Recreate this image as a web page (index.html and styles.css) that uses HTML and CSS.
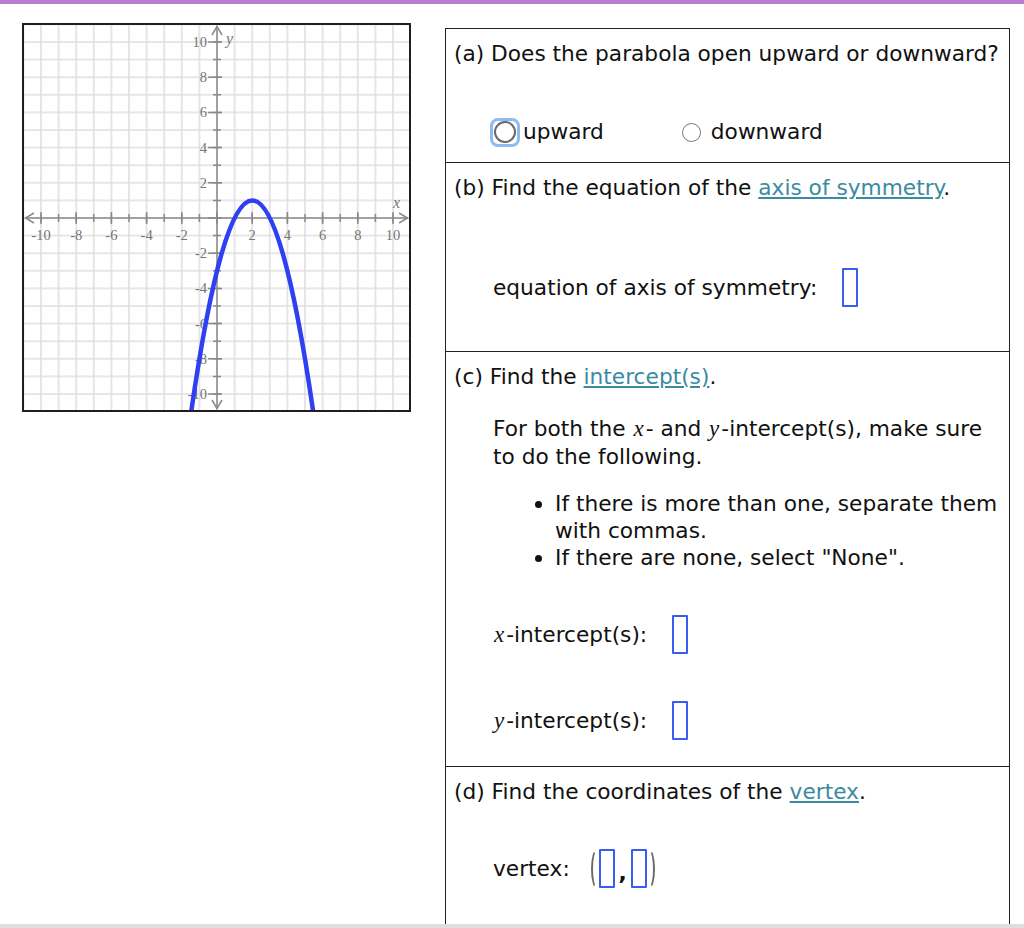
FILE: index.html
```html
<!DOCTYPE html>
<html lang="en">
<head>
    <meta charset="UTF-8">
    <title>Parabola</title>
    <link rel="stylesheet" href="styles.css">
</head>
<body>
    <div class="topbar"></div>
    <div class="page">
        <div class="graph">
            <svg width="385" height="385" viewBox="0 0 385 385">
                <defs>
                    <pattern id="grid" x="184.2" y="184.2" width="17.6" height="17.6" patternUnits="userSpaceOnUse">
                        <path d="M8.8 0 V17.6 M0 8.8 H17.6" stroke="#dedede" stroke-width="1.5" fill="none"/>
                    </pattern>
                </defs>
                <rect width="385" height="385" fill="url(#grid)"/>

                <!-- axes -->
                <g stroke="#8a8a8a" fill="none" stroke-width="1.5">
                    <path d="M1 193 H384 M193 1 V384"/>
                    <path d="M10 188 L1.5 193 L10 198 M375 188 L383.5 193 L375 198"/>
                    <path d="M188 10 L193 1.5 L198 10 M188 375 L193 383.5 L198 375"/>
                    <line x1="16.25" y1="193" x2="370" y2="193" stroke-width="8" stroke-dasharray="1.5 16.1"/>
                    <line x1="16.25" y1="193" x2="370" y2="193" stroke-width="12" stroke-dasharray="1.5 33.7"/>
                    <line x1="193" y1="16.25" x2="193" y2="370" stroke-width="8" stroke-dasharray="1.5 16.1"/>
                    <line x1="191" y1="16.25" x2="191" y2="370" stroke-width="14" stroke-dasharray="1.5 33.7"/>
                </g>

                <g class="ticklabels" text-anchor="middle">
                    <text x="17" y="215">-10</text>
                    <text x="52.2" y="215">-8</text>
                    <text x="87.4" y="215">-6</text>
                    <text x="122.6" y="215">-4</text>
                    <text x="157.8" y="215">-2</text>
                    <text x="228.2" y="215">2</text>
                    <text x="263.4" y="215">4</text>
                    <text x="298.6" y="215">6</text>
                    <text x="333.8" y="215">8</text>
                    <text x="369" y="215">10</text>
                </g>
                <g class="ticklabels" text-anchor="end">
                    <text x="183" y="22">10</text>
                    <text x="183" y="57.2">8</text>
                    <text x="183" y="92.4">6</text>
                    <text x="183" y="127.6">4</text>
                    <text x="183" y="162.8">2</text>
                    <text x="183" y="233.2">-2</text>
                    <text x="183" y="268.4">-4</text>
                    <text x="183" y="303.6">-6</text>
                    <text x="183" y="338.8">-8</text>
                    <text x="183" y="374">-10</text>
                </g>
                <text class="axisname" x="202" y="19">y</text>
                <text class="axisname" x="369" y="183">x</text>

                <path d="M166.6 391 Q228.2 -40.2 289.8 391" stroke="#2f3ff2" stroke-width="4.5" fill="none"/>
            </svg>
        </div>

        <div class="panel">
            <section class="part">
                <p class="question">(a) Does the parabola open upward or downward?</p>
                <div class="choices">
                    <label class="choice">
                        <span class="focus-ring"><span class="radio radio-focused"></span></span>upward
                    </label>
                    <label class="choice">
                        <span class="radio"></span>downward
                    </label>
                </div>
            </section>

            <section class="part part-b">
                <p class="question">(b) Find the equation of the <a href="#">axis of symmetry</a>.</p>
                <div class="answer answer-b">
                    <span class="answer-label">equation of axis of symmetry:</span>
                    <span class="box"></span>
                </div>
            </section>

            <section class="part part-c">
                <p class="question">(c) Find the <a href="#">intercept(s)</a>.</p>
                <div class="indent">
                    <p class="note">For both the <i class="math">x</i>- and <i class="math">y</i>-intercept(s), make sure to do the following.</p>
                    <ul class="rules">
                        <li>If there is more than one, separate them with commas.</li>
                        <li>If there are none, select "None".</li>
                    </ul>
                </div>
                <div class="answer answer-x">
                    <span class="answer-label"><i class="math">x</i>-intercept(s):</span>
                    <span class="box"></span>
                </div>
                <div class="answer answer-y">
                    <span class="answer-label"><i class="math">y</i>-intercept(s):</span>
                    <span class="box"></span>
                </div>
            </section>

            <section class="part part-d">
                <p class="question">(d) Find the coordinates of the <a href="#">vertex</a>.</p>
                <div class="answer answer-d">
                    <span class="answer-label">vertex:</span>
                    <span class="pair">
                        <span class="paren paren-left"></span>
                        <span class="box"></span>
                        <span class="comma">,</span>
                        <span class="box"></span>
                        <span class="paren paren-right"></span>
                    </span>
                </div>
            </section>
        </div>
    </div>
    <div class="bottombar"></div>
</body>
</html>
```

FILE: styles.css
```css
body {
    margin: 0;
    background-color: #fff;
    font-family: 'DejaVu Sans', Verdana, sans-serif;
    font-size: 21.7px;
    color: #111;
}

.topbar {
    height: 4px;
    background-color: #b87cd4;
}

.bottombar {
    height: 4px;
    background-color: #dcdfe1;
}

.page {
    display: flex;
    align-items: flex-start;
    height: 920px;
    overflow: hidden;
}

/* graph */

.graph {
    width: 389px;
    height: 389px;
    box-sizing: border-box;
    margin: 19px 0 0 22px;
    border: 2px solid #1f1f1f;
    flex-shrink: 0;
}

.graph svg {
    display: block;
}

.ticklabels text {
    font-family: 'Liberation Serif', serif;
    font-size: 14.5px;
    fill: #757575;
}

.axisname {
    font-family: 'Liberation Serif', serif;
    font-style: italic;
    font-size: 16px;
    fill: #757575;
}

/* question panel */

.panel {
    width: 565px;
    box-sizing: border-box;
    margin: 24px 0 0 34px;
    border: 1px solid #222;
    border-bottom: none;
    flex-shrink: 0;
}

.part {
    padding: 11px 2px 16px 8px;
    border-bottom: 1px solid #222;
    line-height: 28px;
}

.part-b {
    padding-bottom: 44px;
}

.part-c {
    padding-bottom: 26px;
}

.part-d {
    padding-bottom: 60px;
}

p {
    margin: 0;
}

a {
    color: #3a8ba1;
    text-decoration: underline;
}

.math {
    font-family: 'Liberation Serif', serif;
    font-style: italic;
    font-size: 23px;
    line-height: 1;
    margin: 0 2px 0 1px;
}

/* radio choices */

.choices {
    display: flex;
    align-items: center;
    gap: 78px;
    margin: 50px 0 0 36px;
    height: 28px;
}

.choice {
    display: flex;
    align-items: center;
}

.focus-ring {
    display: flex;
    align-items: center;
    justify-content: center;
    width: 30px;
    height: 29px;
    box-sizing: border-box;
    border: 3px solid #8dbcf3;
    border-radius: 8px;
    margin-right: 3px;
}

.radio {
    display: inline-block;
    width: 19px;
    height: 19px;
    box-sizing: border-box;
    border: 1px solid #777;
    border-radius: 50%;
    margin-right: 10px;
    background: #fff;
}

.radio-focused {
    width: 22px;
    height: 22px;
    border: 2px solid #6a6a6a;
    margin-right: 0;
}

/* answers */

.answer {
    display: flex;
    align-items: center;
    height: 39px;
    margin-left: 39px;
}

.answer-b {
    margin-top: 66px;
}

.answer-x {
    margin-top: 44px;
}

.answer-y {
    margin-top: 47px;
}

.answer-d {
    margin-top: 43px;
}

.answer-label {
    margin-right: 25px;
}

.answer-d .answer-label {
    margin-right: 21px;
}

.box {
    display: inline-block;
    width: 16px;
    height: 39px;
    box-sizing: border-box;
    border: 2px solid #3b5cf0;
    border-radius: 1px;
}

.pair {
    display: flex;
    align-items: center;
}

.paren {
    display: inline-block;
    width: 12px;
    height: 40px;
    box-sizing: border-box;
    border: 2px solid transparent;
    border-radius: 50%;
}

.paren-left {
    border-left-color: #6b6b6b;
    margin-right: -4px;
}

.paren-right {
    border-right-color: #6b6b6b;
    margin-left: -4px;
}

.comma {
    width: 16px;
    text-align: center;
    align-self: flex-end;
    line-height: 32px;
    font-weight: bold;
}

/* part c notes */

.indent {
    margin-left: 39px;
}

.note {
    margin-top: 24px;
    padding-right: 14px;
}

.rules {
    margin: 19px 0 0;
    padding-left: 62px;
    line-height: 27px;
}
```
